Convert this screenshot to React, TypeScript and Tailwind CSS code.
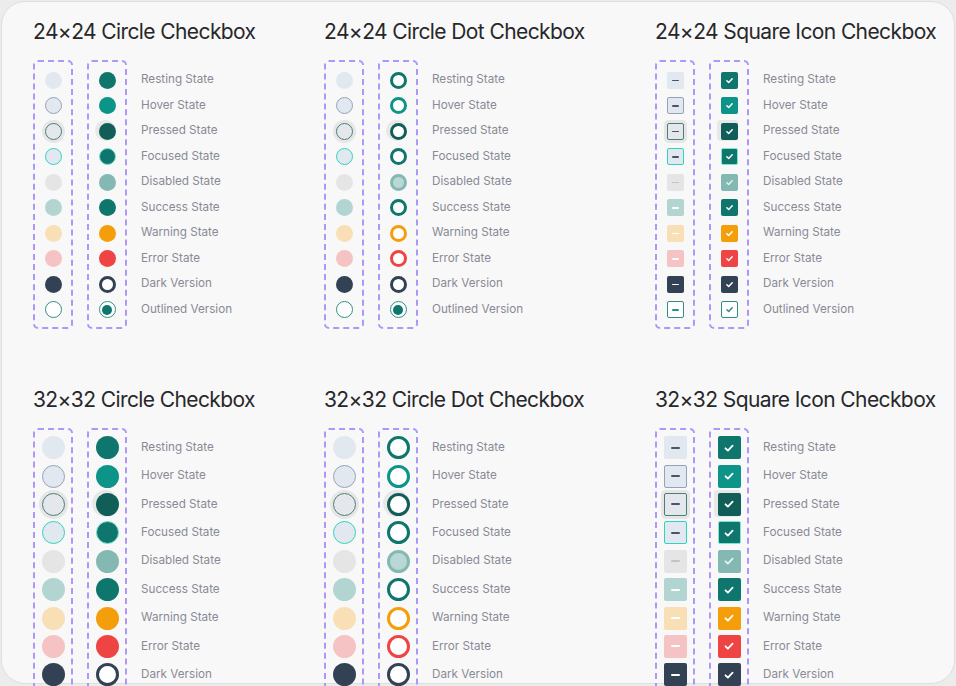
import React from 'react'

type Kind = 'circle' | 'dot' | 'square'
type Size = 24 | 32

const labels = [
  'Resting State',
  'Hover State',
  'Pressed State',
  'Focused State',
  'Disabled State',
  'Success State',
  'Warning State',
  'Error State',
  'Dark Version',
  'Outlined Version',
]

// unchecked fills, shared by circles and squares
const offFill = [
  'bg-[#e2e8f0]',
  'bg-[#e2e8f0] border border-[#94a3b8]',
  'bg-[#e4e7eb] border-[1.5px] border-[#4a7f78] shadow-[0_0_0_3px_#e6e6e6]',
  'bg-[#e2e8f0] border border-[#2dd4bf]',
  'bg-[#e5e5e5]',
  'bg-[#b3d5d2]',
  'bg-[#f9dfb5]',
  'bg-[#f6c3c4]',
  'bg-[#334155]',
  'bg-white border border-[#2f8f84]',
]

const dashColor = [
  'bg-[#475569]',
  'bg-[#475569]',
  'bg-[#475569]',
  'bg-[#475569]',
  'bg-[#c4c4c4]',
  'bg-white',
  'bg-white',
  'bg-white',
  'bg-white',
  'bg-[#2f8f84]',
]

const onFill = [
  'bg-[#0f766e]',
  'bg-[#0d9488]',
  'bg-[#115e59] shadow-[-2px_-1px_0_2px_#e8e8e8]',
  'bg-[#0f766e] border border-[#7de3d3]',
  'bg-[#84b9b3]',
  'bg-[#0f766e]',
  'bg-[#f59e0b]',
  'bg-[#ef4444]',
  'bg-[#334155]',
  'bg-white border border-[#2f8f84]',
]

const ringColor = [
  'border-[#0f766e] bg-white',
  'border-[#0d9488] bg-white',
  'border-[#115e59] bg-white shadow-[-2px_-1px_0_2px_#e8e8e8]',
  'border-[#0f766e] bg-white',
  'border-[#84b9b3] bg-[#b9d8d5]',
  'border-[#0f766e] bg-white',
  'border-[#f59e0b] bg-white',
  'border-[#ef4444] bg-white',
  'border-[#334155] bg-white',
  '',
]

const Check = ({ size, color }: { size: Size; color: string }) => (
  <svg
    width={size === 24 ? 9 : 12}
    height={size === 24 ? 9 : 12}
    viewBox="0 0 12 12"
    fill="none"
    stroke={color}
    strokeWidth={size === 24 ? 2 : 1.8}
    strokeLinecap="round"
    strokeLinejoin="round"
  >
    <path d="M2.5 6.3l2.4 2.3L9.6 3.6" />
  </svg>
)

const OffMark = ({ kind, size, i }: { kind: Kind; size: Size; i: number }) => {
  const dim = size === 24 ? 'w-[17px] h-[17px]' : 'w-[23px] h-[23px]'
  if (kind === 'square') {
    return (
      <div className={`${dim} ${offFill[i]} flex items-center justify-center rounded-[2px]`}>
        <div className={`${size === 24 ? 'w-[7px] h-[1.5px]' : 'w-[9px] h-[2px]'} rounded-full ${dashColor[i]}`} />
      </div>
    )
  }
  return <div className={`${dim} ${offFill[i]} rounded-full`} />
}

const OnMark = ({ kind, size, i }: { kind: Kind; size: Size; i: number }) => {
  const dim = size === 24 ? 'w-[17px] h-[17px]' : 'w-[23px] h-[23px]'
  const outlined = i === 9

  if (kind === 'square') {
    const checkColor = outlined ? '#2f8f84' : i === 4 ? '#e3f1ef' : '#ffffff'
    return (
      <div className={`${dim} ${onFill[i]} flex items-center justify-center rounded-[2px]`}>
        <Check size={size} color={checkColor} />
      </div>
    )
  }

  if (outlined) {
    return (
      <div className={`${dim} flex items-center justify-center rounded-full border border-[#2f8f84] bg-white`}>
        <div className={`${size === 24 ? 'w-[10px] h-[10px]' : 'w-[14px] h-[14px]'} rounded-full bg-[#0f766e]`} />
      </div>
    )
  }

  const thick = size === 24 ? 'border-[3px]' : 'border-[3.5px]'
  if (kind === 'dot' || i === 8) {
    return <div className={`${dim} ${thick} ${ringColor[i]} rounded-full`} />
  }
  return <div className={`${dim} ${onFill[i]} rounded-full`} />
}

const Group = ({ title, kind, size }: { title: string; kind: Kind; size: Size }) => {
  const row = size === 24 ? 'h-[25.5px]' : 'h-[28.4px]'
  const pad = size === 24 ? 'pt-[5.5px] pb-[4.5px]' : 'pt-[3.5px] pb-[3.5px]'
  return (
    <div>
      <h2 className="whitespace-nowrap text-[21px] leading-[26px] tracking-[-0.6px] text-[#27272a]">{title}</h2>
      <div className={`flex gap-[14px] ${size === 24 ? 'mt-[15px]' : 'mt-[15px]'}`}>
        <div className={`w-[40px] rounded-[5px] border-2 border-dashed border-[#ad97f8] ${pad}`}>
          {labels.map((l, i) => (
            <div key={l} className={`${row} flex items-center justify-center`}>
              <OffMark kind={kind} size={size} i={i} />
            </div>
          ))}
        </div>
        <div className={`w-[40px] rounded-[5px] border-2 border-dashed border-[#ad97f8] ${pad}`}>
          {labels.map((l, i) => (
            <div key={l} className={`${row} flex items-center justify-center`}>
              <OnMark kind={kind} size={size} i={i} />
            </div>
          ))}
        </div>
        <div className={`mt-[2px] ${pad}`}>
          {labels.map((l) => (
            <div key={l} className={`${row} flex items-center whitespace-nowrap text-[11.7px] text-[#8a8a96]`}>
              {l}
            </div>
          ))}
        </div>
      </div>
    </div>
  )
}

export default function App() {
  return (
    <div
      className="h-[686px] w-[956px] overflow-hidden bg-[#ececec] pl-[1px] pt-[1px]"
      style={{ fontFamily: 'Inter, "Noto Sans", sans-serif' }}
    >
      <div className="h-[683px] w-[954px] rounded-[24px] border border-[#dedede] bg-[#f8f8f8] pl-[31px] pt-[17px]">
        <div className="grid grid-cols-[291px_331px_1fr]">
          <Group title="24×24 Circle Checkbox" kind="circle" size={24} />
          <Group title="24×24 Circle Dot Checkbox" kind="dot" size={24} />
          <Group title="24×24 Square Icon Checkbox" kind="square" size={24} />
        </div>
        <div className="mt-[58px] grid grid-cols-[291px_331px_1fr]">
          <Group title="32×32 Circle Checkbox" kind="circle" size={32} />
          <Group title="32×32 Circle Dot Checkbox" kind="dot" size={32} />
          <Group title="32×32 Square Icon Checkbox" kind="square" size={32} />
        </div>
      </div>
    </div>
  )
}
